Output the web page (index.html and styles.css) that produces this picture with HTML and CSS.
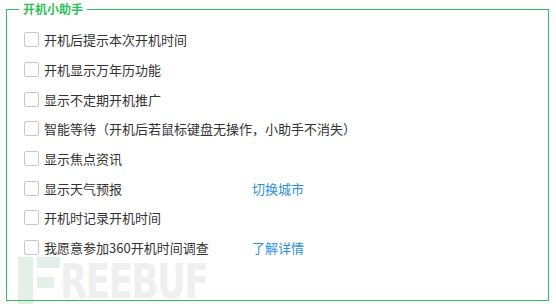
FILE: index.html
```html
<!DOCTYPE html>
<html lang="zh-CN">
<head>
    <meta charset="UTF-8">
    <title>开机小助手</title>
    <link rel="stylesheet" href="styles.css">
</head>
<body>
    <fieldset class="panel">
        <legend class="panel-title">开机小助手</legend>
        <ul class="options">
            <li class="option"><label><span class="box"></span>开机后提示本次开机时间</label></li>
            <li class="option"><label><span class="box"></span>开机显示万年历功能</label></li>
            <li class="option"><label><span class="box"></span>显示不定期开机推广</label></li>
            <li class="option"><label><span class="box"></span>智能等待（开机后若鼠标键盘无操作，小助手不消失）</label></li>
            <li class="option"><label><span class="box"></span>显示焦点资讯</label></li>
            <li class="option"><label><span class="box"></span>显示天气预报</label><a href="#" class="link">切换城市</a></li>
            <li class="option"><label><span class="box"></span>开机时记录开机时间</label></li>
            <li class="option"><label><span class="box"></span>我愿意参加360开机时间调查</label><a href="#" class="link">了解详情</a></li>
        </ul>
    </fieldset>

    <div class="watermark">
        <span class="wm-f"><i class="wm-bar"></i><i class="wm-top"></i><i class="wm-mid"></i></span>
        <span class="wm-text">REEBUF</span>
    </div>
</body>
</html>
```

FILE: styles.css
```css
body {
    margin: 0;
    width: 556px;
    height: 304px;
    background: #fff;
    font-family: "Noto Sans CJK SC", "Microsoft YaHei", sans-serif;
    color: #333;
    position: relative;
    overflow: hidden;
}
.panel {
    margin: 0 7px 0 6px;
    height: 301px;
    box-sizing: border-box;
    border: 1px solid #2ec05a;
    padding: 0 0 0 12px;
    position: relative;
    z-index: 1;
}
.panel-title {
    padding: 0 4px;
    font-size: 12px;
    line-height: 18px;
    font-weight: bold;
    color: #2ec05a;
}
.options {
    list-style: none;
    margin: 7px 0 0 5px;
    padding: 0;
}
.option {
    display: grid;
    grid-template-columns: 228px auto;
    align-items: center;
    height: 29.7px;
    font-size: 13px;
}
.option label {
    display: flex;
    align-items: center;
    white-space: nowrap;
}
.box {
    width: 13px;
    height: 13px;
    border: 1px solid #c8c8c8;
    border-radius: 2px;
    background: #fff;
    margin-right: 5px;
    flex-shrink: 0;
}
.link {
    color: #2d8fe2;
    text-decoration: none;
}
.watermark {
    position: absolute;
    left: 18px;
    top: 257px;
    display: flex;
    z-index: 0;
}
.wm-f {
    position: relative;
    width: 42px;
    height: 47px;
}
.wm-f i {
    position: absolute;
    background: #e3efe7;
}
.wm-bar {
    left: 0;
    top: 0;
    width: 15px;
    height: 47px;
}
.wm-top {
    left: 19px;
    top: 0;
    width: 23px;
    height: 11px;
}
.wm-mid {
    left: 19px;
    top: 20px;
    width: 17px;
    height: 11px;
}
.wm-text {
    font-family: "DejaVu Sans", sans-serif;
    font-weight: bold;
    font-size: 48px;
    line-height: 36px;
    margin-top: 6px;
    color: #efefef;
    letter-spacing: -2px;
    transform: scaleX(0.74);
    transform-origin: left top;
}
```
